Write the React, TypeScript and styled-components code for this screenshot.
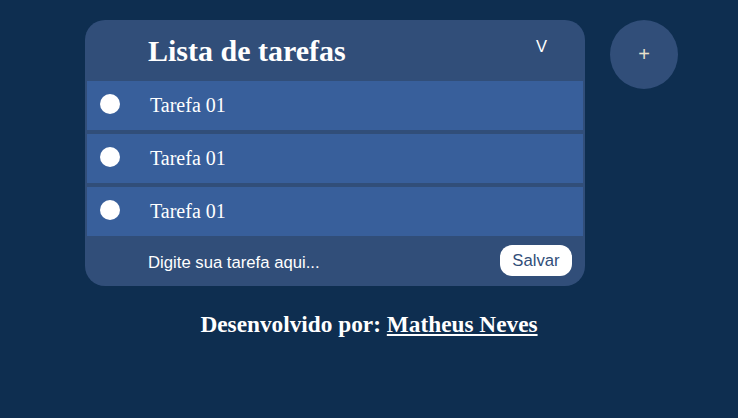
import React from 'react';
import styled, { createGlobalStyle } from 'styled-components';

const GlobalStyle = createGlobalStyle`
  * {
    box-sizing: border-box;
  }

  body {
    margin: 0;
    background-color: #0e2e50;
    font-family: "Liberation Serif", "Times New Roman", serif;
  }
`;

const tasks = ['Tarefa 01', 'Tarefa 01', 'Tarefa 01'];

function App() {
  return (
    <>
      <GlobalStyle />
      <Page>
        <Top>
          <Card>
            <Header>
              <span />
              <Title>Lista de tarefas</Title>
              <Toggle>V</Toggle>
            </Header>
            <List>
              {tasks.map((t, i) => (
                <TaskRow key={i}>
                  <Dot />
                  <TaskText>{t}</TaskText>
                </TaskRow>
              ))}
            </List>
            <Footer>
              <TaskInput placeholder="Digite sua tarefa aqui..." />
              <SaveButton>Salvar</SaveButton>
            </Footer>
          </Card>
          <AddButton>+</AddButton>
        </Top>
        <Credits>
          Desenvolvido por: <CreditLink href="#">Matheus Neves</CreditLink>
        </Credits>
      </Page>
    </>
  );
}

export default App;

const Page = styled.div`
  display: flex;
  flex-direction: column;
  padding-top: 20px;
`;

const Top = styled.div`
  display: flex;
  align-items: flex-start;
  gap: 25px;
  padding-left: 85px;
`;

const Card = styled.div`
  width: 500px;
  background-color: #314e79;
  border-radius: 20px;
  overflow: hidden;
`;

const Header = styled.div`
  height: 59px;
  display: grid;
  grid-template-columns: 63px 1fr auto;
  align-items: center;
  padding-right: 38px;
`;

const Title = styled.h1`
  margin: 0;
  color: #fff;
  font-size: 30px;
  font-weight: bold;
  font-family: "Liberation Serif", "Times New Roman", serif;
  padding-top: 2px;
`;

const Toggle = styled.button`
  background: none;
  border: none;
  padding: 0;
  color: #fff;
  font-family: "Liberation Sans", Arial, sans-serif;
  font-size: 16.5px;
  margin-top: -7px;
`;

const List = styled.div`
  display: flex;
  flex-direction: column;
  gap: 4px;
  padding: 2px;
`;

const TaskRow = styled.div`
  height: 49px;
  display: flex;
  align-items: center;
  gap: 30px;
  padding-left: 13px;
  background-color: #385f9b;
`;

const Dot = styled.span`
  width: 20px;
  height: 20px;
  border-radius: 50%;
  background-color: #fff;
  margin-top: -3px;
`;

const TaskText = styled.span`
  color: #fff;
  font-size: 20px;
  font-family: "Liberation Serif", "Times New Roman", serif;
`;

const Footer = styled.div`
  height: 48px;
  display: flex;
  align-items: center;
  justify-content: space-between;
  padding: 0 13px 3px 63px;
`;

const TaskInput = styled.input`
  background: transparent;
  border: none;
  outline: none;
  padding: 0;
  margin-top: 5px;
  color: #fff;
  font-size: 16.7px;
  font-family: "Liberation Sans", Arial, sans-serif;
  width: 300px;

  &::placeholder {
    color: #fff;
    opacity: 1;
  }
`;

const SaveButton = styled.button`
  width: 72px;
  height: 31px;
  border: none;
  border-radius: 12px;
  background-color: #fff;
  color: #314e79;
  font-size: 16.7px;
  font-family: "Liberation Sans", Arial, sans-serif;
  padding: 0;
`;

const AddButton = styled.button`
  width: 68px;
  height: 69px;
  border: none;
  border-radius: 50%;
  background-color: #314e79;
  color: #e8e0cc;
  font-size: 20px;
  font-family: "Liberation Sans", Arial, sans-serif;
  padding: 0;
`;

const Credits = styled.h3`
  margin: 25px 0 0;
  text-align: center;
  color: #fff;
  font-size: 23.3px;
  font-weight: bold;
  font-family: "Liberation Serif", "Times New Roman", serif;
`;

const CreditLink = styled.a`
  color: #fff;
  text-decoration: underline;
`;
